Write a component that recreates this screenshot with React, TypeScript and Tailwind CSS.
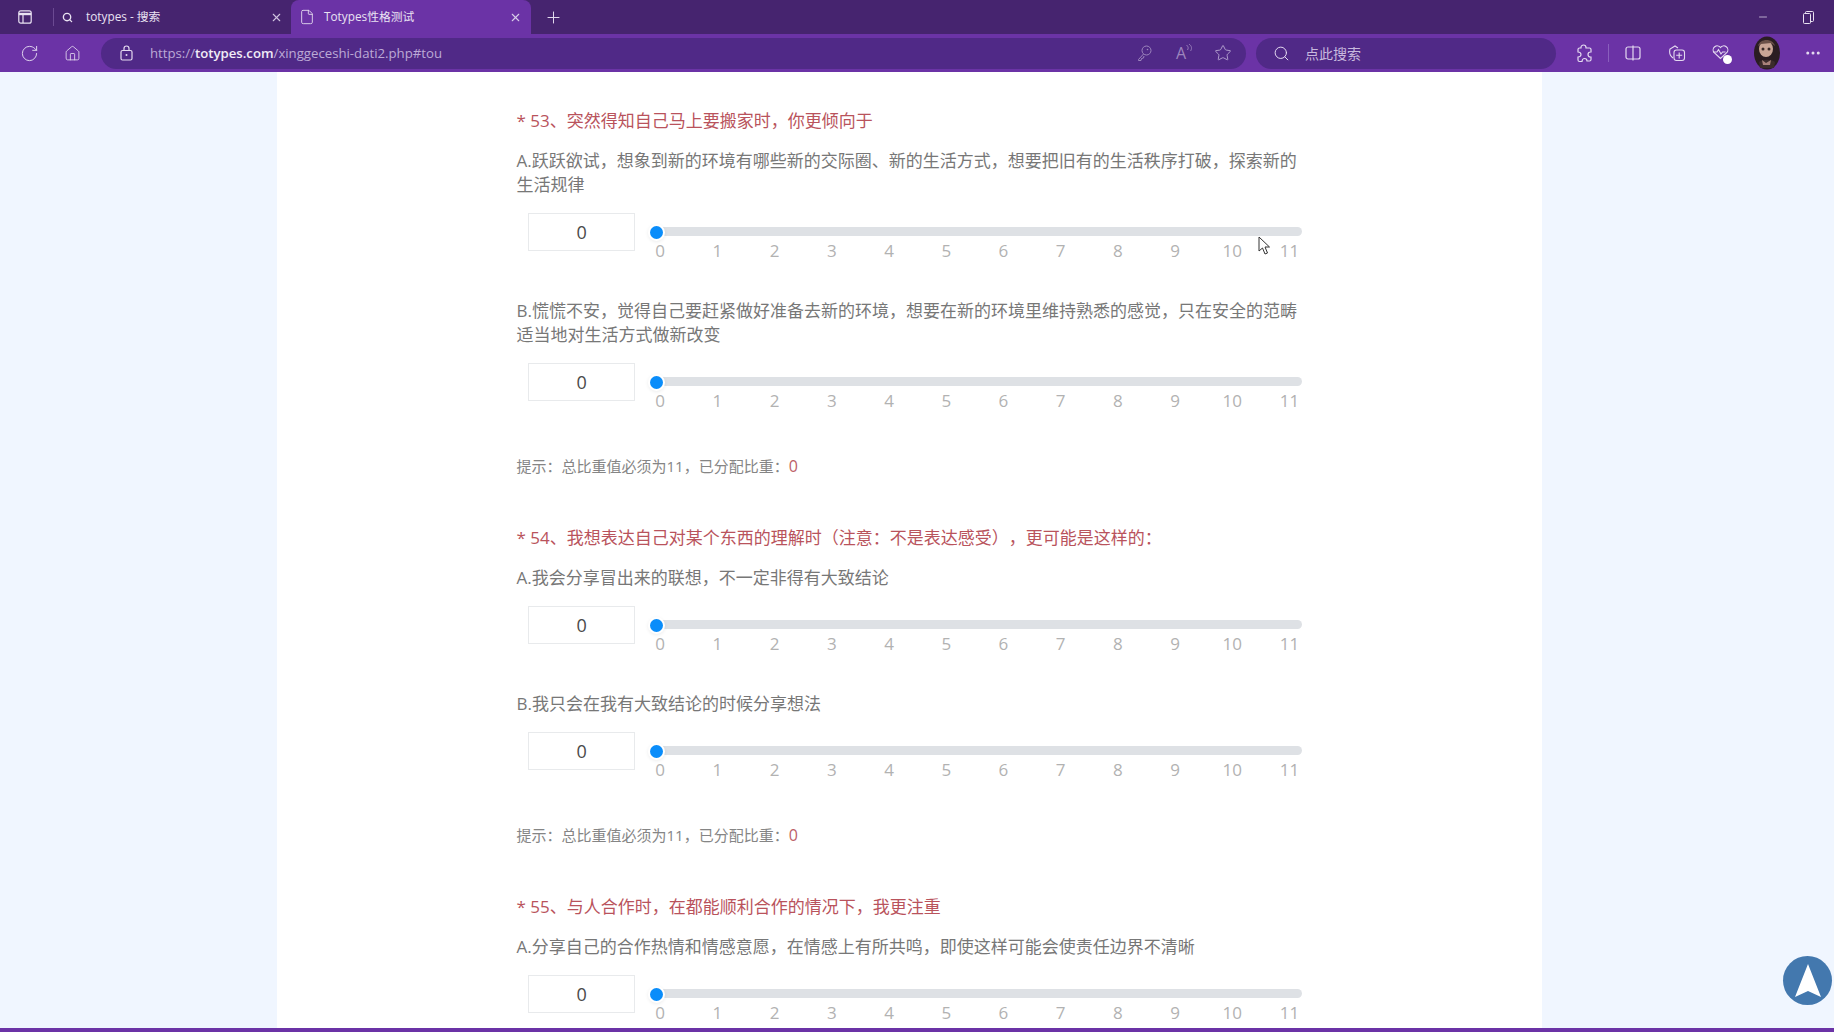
import React from "react";
import { X, Plus, RotateCw, Home, Search, File, Star, Minus, MoreHorizontal } from "lucide-react";

const ticks = [0, 1, 2, 3, 4, 5, 6, 7, 8, 9, 10, 11];

function SliderRow({ className = "" }: { className?: string }) {
  return (
    <div className={"flex items-start ml-[11.5px] " + className}>
      <div className="w-[108px] h-[38px] border border-[#e8eaec] bg-white flex items-center justify-center text-[18px] text-[#4a4a4a]">0</div>
      <div className="ml-[21px] w-[650px]">
        <div className="relative h-[9px] mt-[14px] rounded-full bg-[#dee1e5]">
          <div className="absolute left-[-6.5px] top-[-1px] w-[13px] h-[13px] rounded-full bg-[#0a8dfa] shadow-[0_0_0_2px_#fff,0_1px_4px_1px_rgba(0,0,0,0.12)]" />
        </div>
        <div className="flex justify-between ml-[-6px] mr-[2px] mt-[2.5px] mb-[1.5px] text-[17px] leading-[23px] text-[#b2b2b2]">
          {ticks.map((t) => (
            <span key={t} className="w-[20px] text-center">{t}</span>
          ))}
        </div>
      </div>
    </div>
  );
}

function Hint() {
  return (
    <div className="text-[15px] leading-[24px] text-[#858585]">
      提示：总比重值必须为11，已分配比重：<span className="text-[#bc6068] text-[16px]">0</span>
    </div>
  );
}

function Title({ children, className = "" }: { children: React.ReactNode; className?: string }) {
  return <div className={"text-[17px] leading-[24px] text-[#b9535c] " + className}>{children}</div>;
}

function Opt({ children, className = "" }: { children: React.ReactNode; className?: string }) {
  return <div className={"text-[17px] leading-[24px] text-[#777777] " + className}>{children}</div>;
}

export default function App() {
  return (
    <div
      className="relative w-[1834px] h-[1032px] overflow-hidden flex flex-col bg-[#f0f6ff] [text-spacing-trim:space-all]"
      style={{ fontFamily: '"Open Sans","Noto Sans CJK SC",sans-serif' }}
    >
      {/* tab strip */}
      <div className="h-[34px] shrink-0 bg-[#46246f] flex items-end text-[#e9e2f2] text-[11.8px]">
        <div className="w-[53px] h-full flex items-center pl-[18px]">
          <svg width="14" height="14" viewBox="0 0 14 14" fill="none" stroke="#e9e2f2" strokeWidth="1.2">
            <rect x="0.8" y="0.8" width="12.4" height="12.4" rx="2" />
            <path d="M0.8 4H13.2" strokeWidth="2.4" />
            <path d="M5 4V13" />
          </svg>
        </div>
        <div className="w-[238px] flex items-center border-l border-l-[#6b4a92] pl-[8px] mb-[8px] h-[18px]">
          <Search size={11} strokeWidth={3} />
          <span className="ml-[13px]">totypes - 搜索</span>
          <X size={13} className="ml-auto mr-[8px] text-[#d0c4e0]" />
        </div>
        <div className="w-[240px] h-[34px] bg-[#6b33a6] rounded-t-[8px] flex items-center pl-[8px]">
          <File size={16} strokeWidth={1.3} />
          <span className="ml-[9px]">Totypes性格测试</span>
          <X size={13} className="ml-auto mr-[9px] text-[#d8cde8]" />
        </div>
        <div className="h-full flex items-center ml-[13px]">
          <Plus size={19} strokeWidth={1.2} />
        </div>
        <div className="h-full flex items-center ml-auto">
          <Minus size={12} strokeWidth={1.4} />
          <svg className="ml-[34px] mr-[20px]" width="11" height="13" viewBox="0 0 11 13" fill="none" stroke="#e9e2f2" strokeWidth="1">
            <rect x="0.5" y="2.5" width="7" height="10" rx="1" />
            <path d="M2.5 2.5V1.5a1 1 0 0 1 1-1h6a1 1 0 0 1 1 1v8a1 1 0 0 1-1 1H8" />
          </svg>
        </div>
      </div>

      {/* toolbar */}
      <div className="h-[38px] shrink-0 bg-[#6b33a6] flex items-center text-[#e4daf0]">
        <RotateCw size={19} strokeWidth={1.2} className="ml-[20px]" />
        <Home size={17} strokeWidth={1.2} className="ml-[25px]" />
        <div className="ml-[20px] w-[1145px] h-[31px] rounded-full bg-[#502987] flex items-center text-[13.2px]">
          <svg className="ml-[19px]" width="13" height="16" viewBox="0 0 13 16" fill="none" stroke="#e4daf0" strokeWidth="1.2">
            <rect x="1" y="5.5" width="11" height="9.5" rx="1.5" />
            <path d="M4 5.5V3.5a2.5 2.5 0 0 1 5 0v2" />
            <circle cx="6.5" cy="10" r="1" fill="#e4daf0" stroke="none" />
          </svg>
          <span className="ml-[17px] text-[#bca9d6] translate-y-[0.5px]">
            https://<span className="text-[#f1ecf7] font-semibold">totypes.com</span>/xinggeceshi-dati2.php#tou
          </span>
          <svg className="ml-auto" width="15" height="16" viewBox="0 0 15 16" fill="none" stroke="#9d85bd" strokeWidth="1">
            <circle cx="9.5" cy="5.5" r="4.5" />
            <path d="M6.5 9L1.5 14.5 1.5 15.5 4 15.5 4.5 13.5 6.5 13 7 11" />
            <circle cx="10.5" cy="4.5" r="0.8" fill="#9d85bd" stroke="none" />
          </svg>
          <span className="ml-[24px] flex items-start text-[#9d85bd]">
            <span className="text-[16px] leading-[18px]">A</span>
            <svg width="6" height="10" viewBox="0 0 6 10" fill="none" stroke="#9d85bd" strokeWidth="0.9"><path d="M0.5 1c2 1.5 2 3.5 1 5M3 0c3 2 3 5 1.5 7" /></svg>
          </span>
          <Star size={18} strokeWidth={1.2} className="ml-[22px] mr-[14px] text-[#b8a6d1]" />
        </div>
        <div className="ml-[10px] w-[300px] h-[31px] rounded-full bg-[#502987] flex items-center text-[14px] text-[#c8b9de]">
          <Search size={17} strokeWidth={1.4} className="ml-[17px] text-[#e4daf0]" />
          <span className="ml-[15px] -translate-y-[0.5px]">点此搜索</span>
        </div>
        <svg className="ml-[20px]" width="17" height="19" viewBox="0 0 17 19" fill="none" stroke="#e4daf0" strokeWidth="1.2">
          <path d="M5 3.5C5 1.8 6.3 1 7.5 1S10 1.8 10 3.5V4h3.5A1.5 1.5 0 0 1 15 5.5V8h-.5C13 8 12 9 12 10.5s1 2.5 2.500 2.500h.5v2.500a1.500 1.500 0 0 1-1.500 1.500h-2.500c0-1.800-1.200-2.500-2.500-2.500S6 15.700 6 17.500H3.500A1.500 1.500 0 0 1 2 16v-3c1.800 0 3-1 3-2.500S3.800 8 2 8V5.500A1.500 1.500 0 0 1 3.500 4H5z" />
        </svg>
        <div className="ml-[15px] w-px h-[18px] bg-[#8a5fbd]" />
        <svg className="ml-[16px]" width="16" height="16" viewBox="0 0 16 16" fill="none" stroke="#e4daf0" strokeWidth="1.2">
          <rect x="1" y="2" width="14" height="12" rx="2" />
          <path d="M8 0.5V15.5" />
        </svg>
        <svg className="ml-[27px]" width="18" height="18" viewBox="0 0 18 18" fill="none" stroke="#e4daf0" strokeWidth="1.1">
          <path d="M5 14C2 12 1 9 2 5l5-3 3 2" />
          <rect x="6" y="6" width="10.5" height="10.5" rx="2.5" />
          <path d="M11.2 8.5v6M8.2 11.3h6" />
        </svg>
        <div className="relative ml-[26px] w-[18px] h-[18px]">
          <svg width="17" height="16" viewBox="0 0 17 16" fill="none" stroke="#e4daf0" strokeWidth="1.1">
            <path d="M8.500 14.500L2 8.500a4 4 0 0 1 6.500-5 4 4 0 0 1 6.500 5z" />
            <path d="M1 8h4l1.500-2.500L9 10l1.500-2h3" />
          </svg>
          <div className="absolute right-[-2px] bottom-[-2px] w-[9px] h-[9px] rounded-full bg-white" />
        </div>
        <svg className="ml-[24px]" width="26" height="34" viewBox="0 0 26 34">
          <ellipse cx="13" cy="17" rx="13" ry="16.500" fill="#2a1d22" />
          <ellipse cx="12" cy="13" rx="7" ry="8" fill="#c9a596" />
          <path d="M4 10C6 2 19 2 21 10L17 7 7 8z" fill="#6a5048" />
          <path d="M5 26c3-3 13-3 16 0l-1 6H6z" fill="#3c2c2c" />
          <path d="M8 24l4 3 5-3-1 5H9z" fill="#a8827a" />
          <circle cx="9" cy="13" r="1.500" fill="#3a2a28" />
          <circle cx="15" cy="13" r="1.500" fill="#3a2a28" />
        </svg>
        <MoreHorizontal size={18} strokeWidth={2} className="ml-[24px]" />
      </div>

      {/* page */}
      <div className="flex-1 min-h-0 overflow-hidden">
        <div className="ml-[277px] w-[1265px] h-full bg-white pl-[239.5px] pt-[37px]">
          <div className="w-[785px]">
            <Title>* 53、突然得知自己马上要搬家时，你更倾向于</Title>
            <Opt className="mt-[16px]">A.跃跃欲试，想象到新的环境有哪些新的交际圈、新的生活方式，想要把旧有的生活秩序打破，探索新的生活规律</Opt>
            <SliderRow className="mt-[16px]" />
            <Opt className="mt-[36px]">B.慌慌不安，觉得自己要赶紧做好准备去新的环境，想要在新的环境里维持熟悉的感觉，只在安全的范畴适当地对生活方式做新改变</Opt>
            <SliderRow className="mt-[16px]" />
            <div className="mt-[41px]"><Hint /></div>

            <Title className="mt-[48px]">* 54、我想表达自己对某个东西的理解时（注意：不是表达感受），更可能是这样的：</Title>
            <Opt className="mt-[16px]">A.我会分享冒出来的联想，不一定非得有大致结论</Opt>
            <SliderRow className="mt-[16px]" />
            <Opt className="mt-[36px]">B.我只会在我有大致结论的时候分享想法</Opt>
            <SliderRow className="mt-[16px]" />
            <div className="mt-[41px]"><Hint /></div>

            <Title className="mt-[48px]">* 55、与人合作时，在都能顺利合作的情况下，我更注重</Title>
            <Opt className="mt-[16px]">A.分享自己的合作热情和情感意愿，在情感上有所共鸣，即使这样可能会使责任边界不清晰</Opt>
            <SliderRow className="mt-[16px]" />
          </div>
        </div>
      </div>

      {/* window bottom edge */}
      <div className="absolute left-0 right-0 bottom-0 h-[4px] bg-[#6b33a6]" />

      {/* back to top */}
      <div className="absolute left-[1783px] top-[956px] w-[49px] h-[49px] rounded-full bg-[#4378ae] flex items-center justify-center">
        <svg width="28" height="36" viewBox="0 0 28 36"><path d="M14 1L27 34 14 28 1 34z" fill="#fff" /></svg>
      </div>

      {/* mouse cursor */}
      <svg className="absolute left-[1258px] top-[236px]" width="13" height="20" viewBox="0 0 13 20" fill="#fff" stroke="#333" strokeWidth="1">
        <path d="M1 1v14l3.500-3 2.500 6 2.500-1-2.500-6h4.500z" />
      </svg>
    </div>
  );
}
